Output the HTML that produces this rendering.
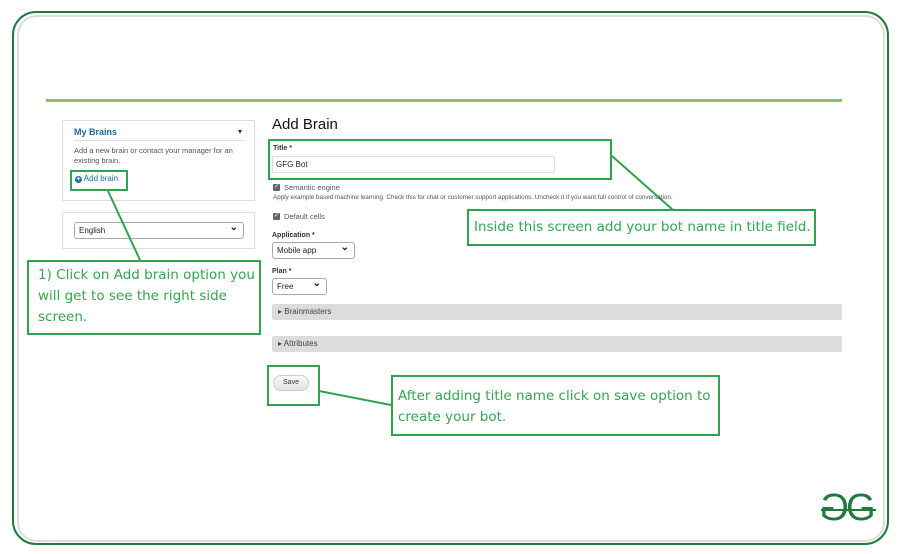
<!DOCTYPE html>
<html><head><meta charset="utf-8"><style>
*{margin:0;padding:0;box-sizing:border-box}
body{width:900px;height:554px;background:#fff;position:relative;overflow:hidden;font-family:"Liberation Sans",Arial,sans-serif;color:#333}
.a{position:absolute}
.frame{left:12px;top:11px;width:877px;height:534px;border:2px solid #1f7a3c;border-radius:24px}
.frame2{left:17px;top:15px;width:868px;height:527px;border:2px solid #ddd;border-radius:20px}
.gb{border:2px solid #30a34f}
.ct{color:#35a550;font-family:"DejaVu Sans","Liberation Sans",sans-serif;font-size:13.5px;line-height:21px}
.panel{border:1px solid #ddd;background:#fff}
.sel{border:1px solid #aaa;border-radius:3px;background:#fff;font-size:8px;padding-left:4px;line-height:15px;color:#222}
.sel:after{content:"⌄";position:absolute;right:5px;top:-3px;font-size:10px;font-weight:bold}
.bar{background:#dcdcdc;border-radius:2px;font-size:8px;color:#444;padding-left:6px;line-height:16px}
.lb{font-size:7px;font-weight:bold;color:#333}
.cb{width:7px;height:7px;background:#666;border-radius:1px;color:#fff;font-size:6px;line-height:7px;text-align:center}
.sm{font-size:7.5px;color:#555}
.g{font-family:"Liberation Sans",sans-serif;font-size:38px;color:#1f7a3c;line-height:40px}
</style></head><body>
<div class="a frame2"></div>
<div class="a frame"></div>
<div class="a" style="left:46px;top:99px;width:796px;height:3px;background:#8dc14f"></div>

<div class="a panel" style="left:62px;top:120px;width:193px;height:81px"></div>
<div class="a" style="left:74px;top:127px;font-size:9px;font-weight:bold;color:#1f6a9a">My Brains</div>
<div class="a" style="left:238px;top:127px;font-size:8px">▾</div>
<div class="a" style="left:74px;top:140px;width:169px;height:1px;background:#ddd"></div>
<div class="a sm" style="left:74px;top:146px;line-height:10px;width:170px">Add a new brain or contact your manager for an existing brain.</div>
<div class="a" style="left:75px;top:174px;font-size:8px;color:#1f6a9a"><span style="display:inline-block;width:7px;height:7px;border-radius:50%;background:#1f6a9a;color:#fff;font-size:7px;line-height:7px;text-align:center;font-weight:bold">+</span> Add brain</div>
<div class="a gb" style="left:70px;top:170px;width:58px;height:21px"></div>

<div class="a panel" style="left:62px;top:212px;width:193px;height:37px"></div>
<div class="a sel" style="left:74px;top:222px;width:170px;height:17px">English</div>

<svg class="a" style="left:0;top:0" width="900" height="554">
<g stroke="#30a34f" stroke-width="2" fill="none">
<line x1="108" y1="191" x2="140" y2="260"/>
<line x1="612" y1="156" x2="673" y2="210"/>
<line x1="319" y1="391" x2="391" y2="405"/>
</g></svg>

<div class="a gb" style="left:27px;top:260px;width:234px;height:75px"></div>
<div class="a ct" style="left:38px;top:265px;width:225px">1) Click on Add brain option you will get to see the right side screen.</div>

<div class="a" style="left:272px;top:116px;font-size:15px;color:#111">Add Brain</div>
<div class="a gb" style="left:268px;top:139px;width:344px;height:41px"></div>
<div class="a lb" style="left:273px;top:145px">Title *</div>
<div class="a" style="left:272px;top:156px;width:283px;height:17px;border:1px solid #ddd;border-radius:2px;font-size:8px;padding-left:3px;line-height:15px;color:#222">GFG Bot</div>

<div class="a cb" style="left:273px;top:184px">✓</div>
<div class="a sm" style="left:284px;top:183px;font-size:7.5px">Semantic engine</div>
<div class="a" style="left:273px;top:194px;font-size:6.3px;color:#555">Apply example based machine learning. Check this for chat or customer support applications. Uncheck it if you want full control of conversation.</div>
<div class="a cb" style="left:273px;top:213px">✓</div>
<div class="a sm" style="left:284px;top:212px">Default cells</div>

<div class="a lb" style="left:272px;top:232px">Application *</div>
<div class="a sel" style="left:272px;top:242px;width:83px;height:17px;line-height:15px">Mobile app</div>
<div class="a lb" style="left:272px;top:268px">Plan *</div>
<div class="a sel" style="left:272px;top:278px;width:55px;height:17px">Free</div>

<div class="a bar" style="left:272px;top:304px;width:570px;height:16px">▸ Brainmasters</div>
<div class="a bar" style="left:272px;top:336px;width:570px;height:16px">▸ Attributes</div>

<div class="a gb" style="left:267px;top:365px;width:53px;height:41px"></div>
<div class="a" style="left:273px;top:375px;width:36px;height:16px;border-radius:8px;background:linear-gradient(#fafafa,#e2e2e2);border:1px solid #ccc;font-size:7px;text-align:center;line-height:14px;color:#333">Save</div>

<div class="a gb" style="left:391px;top:375px;width:329px;height:61px"></div>
<div class="a ct" style="left:398px;top:386px;width:320px">After adding title name click on save option to create your bot.</div>

<div class="a gb" style="left:467px;top:209px;width:349px;height:37px"></div>
<div class="a ct" style="left:474px;top:217px;white-space:nowrap">Inside this screen add your bot name in title field.</div>

<div class="a g" style="left:819px;top:488px;transform:scaleX(-1);width:30px">G</div>
<div class="a g" style="left:846px;top:488px">G</div>
<div class="a" style="left:821px;top:509px;width:55px;height:2px;background:#1f7a3c"></div>
</body></html>
